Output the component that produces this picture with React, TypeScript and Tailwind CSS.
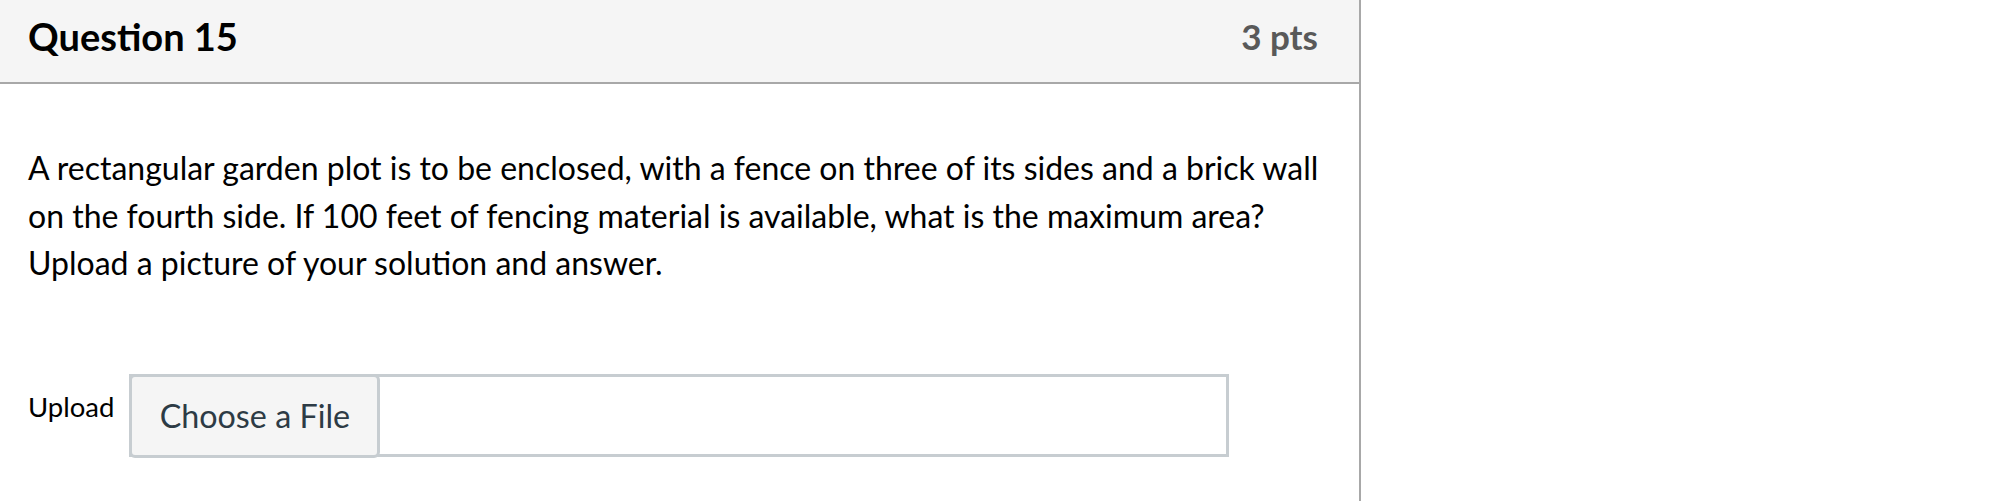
import React from 'react';

const App: React.FC = () => {
  return (
    <div className="w-[2011px] h-[501px] bg-white flex font-['Lato','Liberation_Sans',sans-serif]">
      <div className="w-[1361px] h-full border-r-2 border-[#a8a8a8] flex flex-col">
        {/* Header */}
        <div className="h-[84px] shrink-0 bg-[#f5f5f5] border-b-2 border-[#a8a8a8] flex items-center justify-between pl-[28px] pr-[41px] pb-[10px]">
          <h2 className="text-[38px] font-bold text-[#000000] leading-none">Question 15</h2>
          <span className="text-[35px] font-bold text-[#595959] leading-none">3 pts</span>
        </div>

        {/* Body */}
        <div className="pl-[28px] pr-[30px] pt-[60px]">
          <p className="text-[32px] leading-[47.7px] text-[#000000]">
            A rectangular garden plot is to be enclosed, with a fence on three of its sides and a brick wall on the
            fourth side. If 100 feet of fencing material is available, what is the maximum area? Upload a picture of
            your solution and answer.
          </p>

          <div className="flex items-start gap-[15px] mt-[87px]">
            <span className="text-[27.5px] text-[#000000] pt-[16px] leading-[34px]">Upload</span>
            <div className="w-[1100px] h-[83px] border-[3px] border-[#c7cdd1] flex">
              <button className="w-[245px] h-full -m-[3px] box-content bg-[#f5f5f5] border-[3px] border-[#c7cdd1] rounded-[6px] text-[32.3px] text-[#2d3b45] pt-[1px]">
                Choose a File
              </button>
            </div>
          </div>
        </div>
      </div>
    </div>
  );
};

export default App;
